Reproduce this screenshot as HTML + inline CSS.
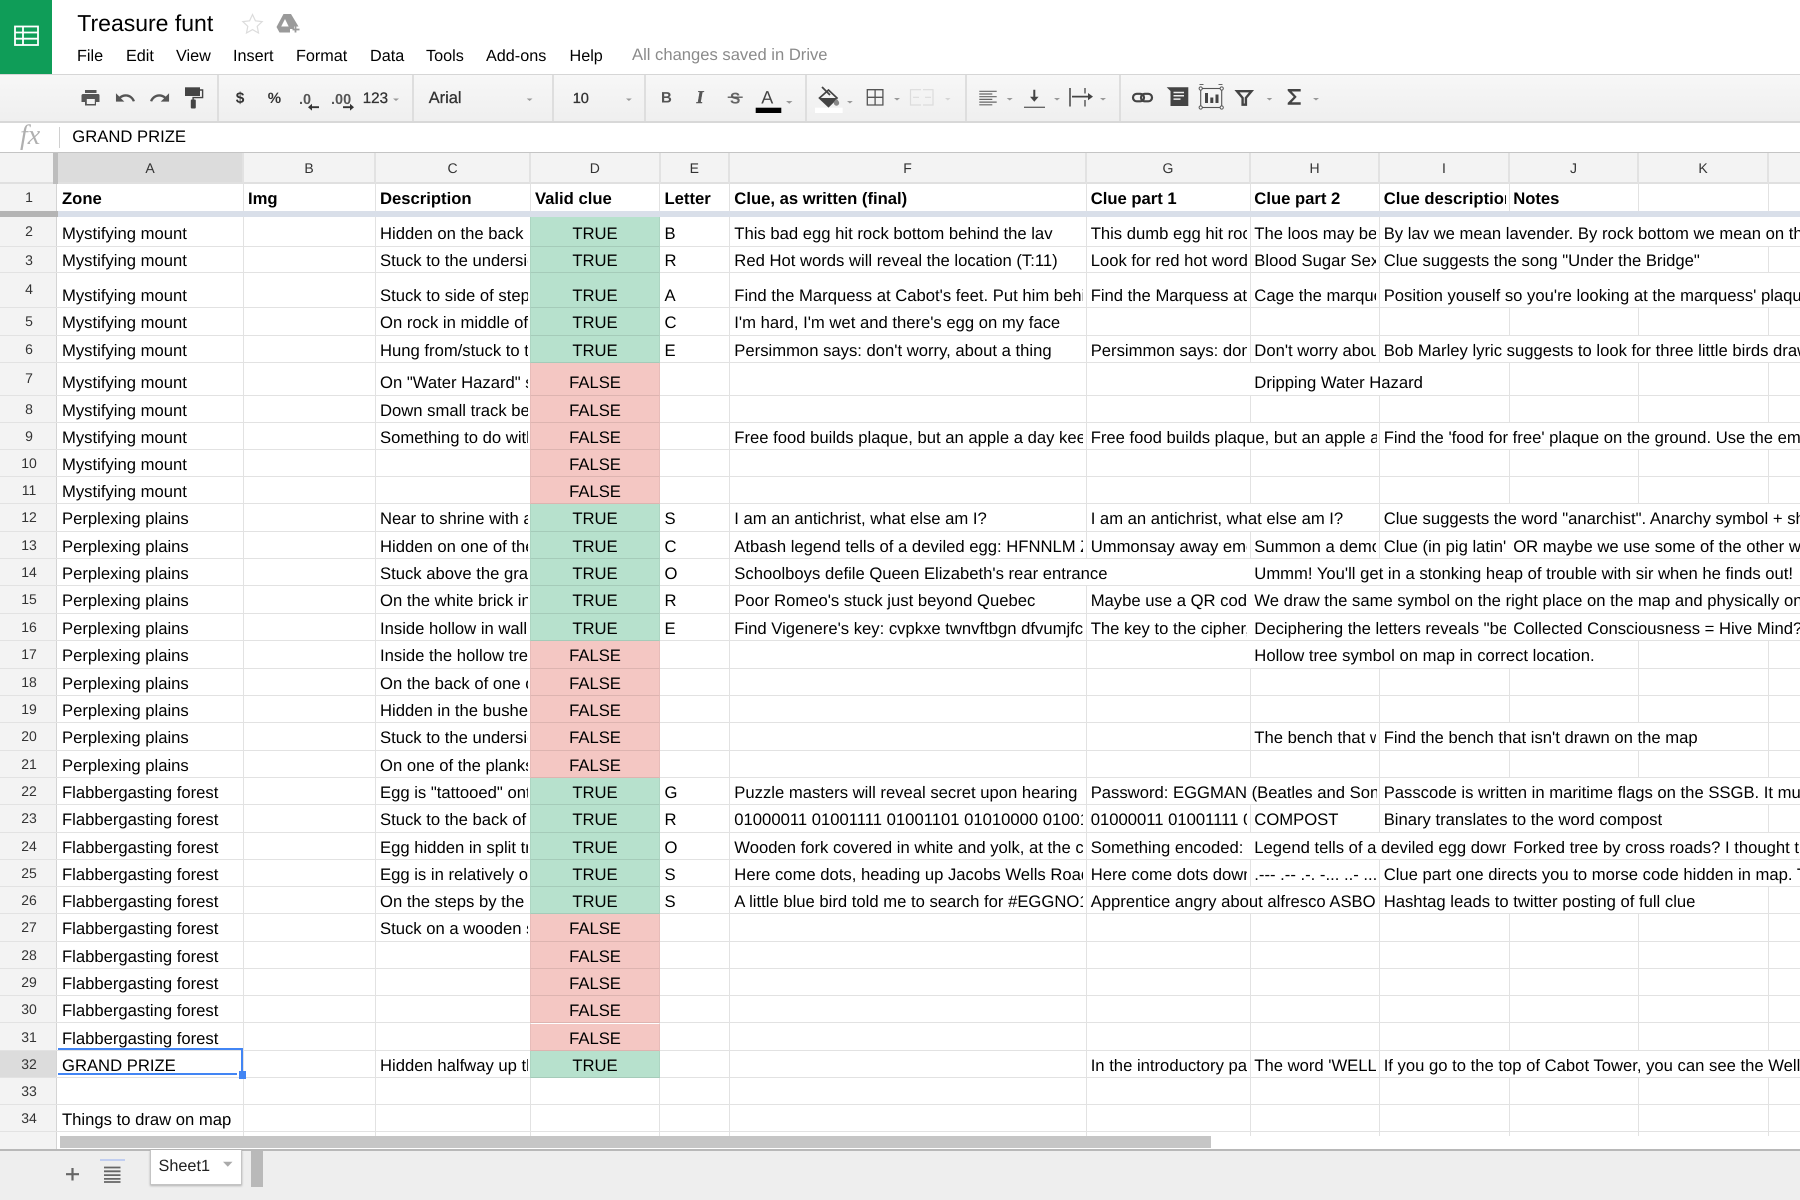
<!DOCTYPE html>
<html lang="en"><head><meta charset="utf-8"><title>Treasure funt</title>
<style>
html,body{margin:0;padding:0;background:#fff}
body{position:relative;width:1800px;height:1200px;overflow:hidden;font-family:"Liberation Sans",Arial,sans-serif;color:#000;text-rendering:geometricPrecision;-webkit-font-smoothing:antialiased;filter:blur(.3px)}
div{box-sizing:border-box}
.abs{position:absolute}
.t{position:absolute;white-space:nowrap}
.tb{position:absolute;left:0;top:74px;width:1800px;height:49px;background:linear-gradient(#f7f7f7,#efefef);border-top:1px solid #d6d6d6;border-bottom:2px solid #d8d8d8}
.sep{position:absolute;top:75px;width:2px;height:46px;background:#dedede}
.v{position:absolute;top:184px;height:952px;width:1px;background:#e2e2e2}
.hc{position:absolute;top:153px;height:31px;background:#f3f3f3;border-right:2px solid #e2e2e2;border-bottom:2px solid #e0e0e0;text-align:center;font-size:14px;line-height:30px;color:#333}
.r{position:absolute;left:0;width:1800px;height:27.3px;border-bottom:1px solid #e2e2e2;font-size:16.65px}
.r>div{position:absolute;top:0;bottom:0;white-space:nowrap;overflow:hidden;padding:var(--p,2px) 0 0 4px;line-height:26px}
.r>.n{left:0;width:57px;padding:0 0 0 2px;background:#f3f3f3;border-right:1px solid #d4d4d4;text-align:center;font-size:14px;color:#333;line-height:var(--l,26px)}
.r>.a{left:58px;width:182px}
.r>.c{left:376px;width:152px}
.r>.d{left:530px;width:130px;text-align:center;padding-left:0;bottom:-1px;border-bottom:1px solid rgba(0,0,0,.09);border-left:1px solid rgba(0,0,0,.05);border-right:1px solid rgba(0,0,0,.05)}
.r>.e{left:660.5px;width:67px}
.r>.f{left:730.3px;width:353px}
.r>.g{left:1086.7px;width:160.5px}
.r>.h{left:1250.3px;width:126px}
.r>.i{left:1379.7px;width:126.5px}
.r>.j{left:1509.2px;width:125px}
.r>.w{background:#fff}
.T{background:#b7e1cd}
.F{background:#f4c7c3}
.b{font-weight:bold}
svg text{font-family:"Liberation Sans",Arial,sans-serif}
</style></head><body>

<div class="abs" style="left:0;top:0;width:52px;height:75px;background:#0f9d58"></div>
<div class="t" style="left:77.300px;top:9px;font-size:23px;line-height:28px">Treasure funt</div>
<div class="t" style="left:77px;top:46px;font-size:16.2px;line-height:20px">File</div>
<div class="t" style="left:126px;top:46px;font-size:16.2px;line-height:20px">Edit</div>
<div class="t" style="left:176px;top:46px;font-size:16.2px;line-height:20px">View</div>
<div class="t" style="left:233px;top:46px;font-size:16.2px;line-height:20px">Insert</div>
<div class="t" style="left:296px;top:46px;font-size:16.2px;line-height:20px">Format</div>
<div class="t" style="left:370px;top:46px;font-size:16.2px;line-height:20px">Data</div>
<div class="t" style="left:426px;top:46px;font-size:16.2px;line-height:20px">Tools</div>
<div class="t" style="left:486px;top:46px;font-size:16.2px;line-height:20px">Add-ons</div>
<div class="t" style="left:569.500px;top:46px;font-size:16.2px;line-height:20px">Help</div>
<div class="t" style="left:632px;top:45px;font-size:16.6px;line-height:20px;color:#8a8a8a">All changes saved in Drive</div>

<div class="tb"></div>
<div class="sep" style="left:217px"></div><div class="sep" style="left:411.500px"></div><div class="sep" style="left:551.500px"></div><div class="sep" style="left:643.500px"></div><div class="sep" style="left:804.500px"></div><div class="sep" style="left:965px"></div><div class="sep" style="left:1118.500px"></div>

<div class="t" style="left:20px;top:121px;font:italic 28px/30px 'Liberation Serif',serif;color:#b0b0b0">fx</div>
<div class="abs" style="left:59px;top:127px;width:1px;height:21px;background:#d0d0d0"></div>
<div class="t" style="left:72.300px;top:125px;font-size:16.65px;line-height:24px">GRAND PRIZE</div>
<div class="abs" style="left:0;top:151.500px;width:1800px;height:2px;background:#c4c4c4"></div>

<div class="hc" style="left:0;width:53px;border-right:0"></div>
<div class="abs" style="left:53px;top:153px;width:5px;height:31px;background:#bdbdbd"></div>
<div class="hc" style="left:58px;width:186px;background:#dcdcdc">A</div>
<div class="hc" style="left:244px;width:132px">B</div>
<div class="hc" style="left:376px;width:155px">C</div>
<div class="hc" style="left:531px;width:129.500px">D</div>
<div class="hc" style="left:660.500px;width:69.500px">E</div>
<div class="hc" style="left:730px;width:357px">F</div>
<div class="hc" style="left:1087px;width:164px">G</div>
<div class="hc" style="left:1251px;width:129px">H</div>
<div class="hc" style="left:1380px;width:130px">I</div>
<div class="hc" style="left:1510px;width:129px">J</div>
<div class="hc" style="left:1639px;width:130px">K</div>
<div class="hc" style="left:1769px;width:31px;border-right:0"></div>

<div class="abs" style="left:0;top:184px;width:57px;height:966px;background:#f3f3f3;border-right:1px solid #d4d4d4"></div>

<div class="v" style="left:243px"></div><div class="v" style="left:375px"></div><div class="v" style="left:530px"></div><div class="v" style="left:659px"></div><div class="v" style="left:729px"></div><div class="v" style="left:1086px"></div><div class="v" style="left:1250px"></div><div class="v" style="left:1379px"></div><div class="v" style="left:1509px"></div><div class="v" style="left:1638px"></div><div class="v" style="left:1768px"></div>

<div class="r b" style="top:184px;height:27px;border-bottom:0"><div class="n" style="font-weight:normal">1</div><div class="a">Zone</div><div class="a" style="left:244px;width:128px">Img</div><div class="c">Description</div><div class="c" style="left:531px;width:126px">Valid clue</div><div class="e">Letter</div><div class="f">Clue, as written (final)</div><div class="g">Clue part 1</div><div class="h">Clue part 2</div><div class="i">Clue description</div><div class="j">Notes</div></div>
<div class="abs" style="left:0;top:211px;width:58px;height:6px;background:#b4b4b4"></div>
<div class="abs" style="left:58px;top:211px;width:1742px;height:6px;background:#d9dfe9"></div>

<div class="r" style="top:217px;height:29.700px;--p:4.400px;--l:28px"><div class="n">2</div><div class="a">Mystifying mount</div><div class="c">Hidden on the back of</div><div class="d T">TRUE</div><div class="e">B</div><div class="f">This bad egg hit rock bottom behind the lav</div><div class="g">This dumb egg hit rock</div><div class="h">The loos may be</div><div class="i w" style="width:420.300px">By lav we mean lavender. By rock bottom we mean on the</div></div>
<div class="r" style="top:246.700px;height:26.600px;--p:1.300px"><div class="n">3</div><div class="a">Mystifying mount</div><div class="c">Stuck to the underside</div><div class="d T">TRUE</div><div class="e">R</div><div class="f">Red Hot words will reveal the location (T:11)</div><div class="g">Look for red hot words</div><div class="h">Blood Sugar Sex Magik</div><div class="i w" style="width:388px">Clue suggests the song "Under the Bridge"</div></div>
<div class="r" style="top:273.300px;height:35px;--p:9.700px;--l:33px"><div class="n">4</div><div class="a">Mystifying mount</div><div class="c">Stuck to side of steps</div><div class="d T">TRUE</div><div class="e">A</div><div class="f">Find the Marquess at Cabot's feet. Put him behind</div><div class="g">Find the Marquess at Cabot</div><div class="h">Cage the marquess</div><div class="i w" style="width:420.300px">Position youself so you're looking at the marquess' plaque</div></div>
<div class="r" style="top:308.300px;height:27.400px"><div class="n">5</div><div class="a">Mystifying mount</div><div class="c">On rock in middle of</div><div class="d T">TRUE</div><div class="e">C</div><div class="f">I'm hard, I'm wet and there's egg on my face</div></div>
<div class="r" style="top:335.700px;height:27.600px"><div class="n">6</div><div class="a">Mystifying mount</div><div class="c">Hung from/stuck to tree</div><div class="d T">TRUE</div><div class="e">E</div><div class="f">Persimmon says: don't worry, about a thing</div><div class="g">Persimmon says: don't</div><div class="h">Don't worry about</div><div class="i w" style="width:420.300px">Bob Marley lyric suggests to look for three little birds drawn</div></div>
<div class="r" style="top:363.300px;height:32.400px;--p:7.100px;--l:30px"><div class="n">7</div><div class="a">Mystifying mount</div><div class="c">On "Water Hazard" sign</div><div class="d F">FALSE</div><div class="h w" style="width:256px">Dripping Water Hazard</div></div>
<div class="r" style="top:395.700px;height:27px"><div class="n">8</div><div class="a">Mystifying mount</div><div class="c">Down small track behind</div><div class="d F">FALSE</div></div>
<div class="r" style="top:422.700px"><div class="n">9</div><div class="a">Mystifying mount</div><div class="c">Something to do with</div><div class="d F">FALSE</div><div class="f">Free food builds plaque, but an apple a day keeps</div><div class="g w" style="width:290px">Free food builds plaque, but an apple a day</div><div class="i w" style="width:420.300px">Find the 'food for free' plaque on the ground. Use the em</div></div>
<div class="r" style="top:450px"><div class="n">10</div><div class="a">Mystifying mount</div><div class="d F">FALSE</div></div>
<div class="r" style="top:477.300px;height:27px"><div class="n">11</div><div class="a">Mystifying mount</div><div class="d F">FALSE</div></div>
<div class="r" style="top:504.300px;height:27.400px"><div class="n">12</div><div class="a">Perplexing plains</div><div class="c">Near to shrine with a</div><div class="d T">TRUE</div><div class="e">S</div><div class="f">I am an antichrist, what else am I?</div><div class="g w" style="width:290px">I am an antichrist, what else am I?</div><div class="i w" style="width:420.300px">Clue suggests the word "anarchist". Anarchy symbol + sh</div></div>
<div class="r" style="top:531.700px"><div class="n">13</div><div class="a">Perplexing plains</div><div class="c">Hidden on one of the</div><div class="d T">TRUE</div><div class="e">C</div><div class="f">Atbash legend tells of a deviled egg: HFNNLM ZDZB</div><div class="g">Ummonsay away emon</div><div class="h">Summon a demon</div><div class="i">Clue (in pig latin's</div><div class="j w" style="width:290.800px">OR maybe we use some of the other w</div></div>
<div class="r" style="top:559px"><div class="n">14</div><div class="a">Perplexing plains</div><div class="c">Stuck above the grate</div><div class="d T">TRUE</div><div class="e">O</div><div class="f w" style="width:518px">Schoolboys defile Queen Elizabeth's rear entrance</div><div class="h w" style="width:549.700px">Ummm! You'll get in a stonking heap of trouble with sir when he finds out!</div></div>
<div class="r" style="top:586.300px;height:27.700px"><div class="n">15</div><div class="a">Perplexing plains</div><div class="c">On the white brick in</div><div class="d T">TRUE</div><div class="e">R</div><div class="f">Poor Romeo's stuck just beyond Quebec</div><div class="g">Maybe use a QR code</div><div class="h w" style="width:549.700px">We draw the same symbol on the right place on the map and physically on</div></div>
<div class="r" style="top:614px"><div class="n">16</div><div class="a">Perplexing plains</div><div class="c">Inside hollow in wall</div><div class="d T">TRUE</div><div class="e">E</div><div class="f">Find Vigenere's key: cvpkxe twnvftbgn dfvumjfc</div><div class="g">The key to the cipher,</div><div class="h w" style="width:256px">Deciphering the letters reveals "be</div><div class="j w" style="width:290.800px">Collected Consciousness = Hive Mind?</div></div>
<div class="r" style="top:641.300px;height:27.400px"><div class="n">17</div><div class="a">Perplexing plains</div><div class="c">Inside the hollow tree</div><div class="d F">FALSE</div><div class="h w" style="width:387px">Hollow tree symbol on map in correct location.</div></div>
<div class="r" style="top:668.700px"><div class="n">18</div><div class="a">Perplexing plains</div><div class="c">On the back of one of</div><div class="d F">FALSE</div></div>
<div class="r" style="top:696px"><div class="n">19</div><div class="a">Perplexing plains</div><div class="c">Hidden in the bushes</div><div class="d F">FALSE</div></div>
<div class="r" style="top:723.300px;height:27.400px"><div class="n">20</div><div class="a">Perplexing plains</div><div class="c">Stuck to the underside</div><div class="d F">FALSE</div><div class="h">The bench that was</div><div class="i w" style="width:388px">Find the bench that isn't drawn on the map</div></div>
<div class="r" style="top:750.700px"><div class="n">21</div><div class="a">Perplexing plains</div><div class="c">On one of the planks</div><div class="d F">FALSE</div></div>
<div class="r" style="top:778px"><div class="n">22</div><div class="a">Flabbergasting forest</div><div class="c">Egg is "tattooed" onto</div><div class="d T">TRUE</div><div class="e">G</div><div class="f">Puzzle masters will reveal secret upon hearing my</div><div class="g w" style="width:290px">Password: EGGMAN (Beatles and Sons)</div><div class="i w" style="width:420.300px">Passcode is written in maritime flags on the SSGB. It mu</div></div>
<div class="r" style="top:805.300px;height:27.400px"><div class="n">23</div><div class="a">Flabbergasting forest</div><div class="c">Stuck to the back of</div><div class="d T">TRUE</div><div class="e">R</div><div class="f">01000011 01001111 01001101 01010000 01001111</div><div class="g">01000011 01001111 01</div><div class="h">COMPOST</div><div class="i w" style="width:388px">Binary translates to the word compost</div></div>
<div class="r" style="top:832.700px"><div class="n">24</div><div class="a">Flabbergasting forest</div><div class="c">Egg hidden in split tree</div><div class="d T">TRUE</div><div class="e">O</div><div class="f">Wooden fork covered in white and yolk, at the cross</div><div class="g">Something encoded:</div><div class="h w" style="width:256px">Legend tells of a deviled egg down</div><div class="j w" style="width:290.800px">Forked tree by cross roads? I thought t</div></div>
<div class="r" style="top:860px"><div class="n">25</div><div class="a">Flabbergasting forest</div><div class="c">Egg is in relatively open</div><div class="d T">TRUE</div><div class="e">S</div><div class="f">Here come dots, heading up Jacobs Wells Road</div><div class="g">Here come dots down</div><div class="h">.--- .-- .-. -... ..- ...</div><div class="i w" style="width:420.300px">Clue part one directs you to morse code hidden in map. T</div></div>
<div class="r" style="top:887.300px;height:27px"><div class="n">26</div><div class="a">Flabbergasting forest</div><div class="c">On the steps by the</div><div class="d T">TRUE</div><div class="e">S</div><div class="f">A little blue bird told me to search for #EGGNO1</div><div class="g w" style="width:290px">Apprentice angry about alfresco ASBO</div><div class="i w" style="width:388px">Hashtag leads to twitter posting of full clue</div></div>
<div class="r" style="top:914.300px"><div class="n">27</div><div class="a">Flabbergasting forest</div><div class="c">Stuck on a wooden sign</div><div class="d F">FALSE</div></div>
<div class="r" style="top:941.600px"><div class="n">28</div><div class="a">Flabbergasting forest</div><div class="d F">FALSE</div></div>
<div class="r" style="top:968.900px"><div class="n">29</div><div class="a">Flabbergasting forest</div><div class="d F">FALSE</div></div>
<div class="r" style="top:996.200px"><div class="n">30</div><div class="a">Flabbergasting forest</div><div class="d F">FALSE</div></div>
<div class="r" style="top:1023.500px;height:27.200px"><div class="n">31</div><div class="a">Flabbergasting forest</div><div class="d F">FALSE</div></div>
<div class="r" style="top:1050.700px;height:27.600px"><div class="n" style="background:#dcdcdc">32</div><div class="a">GRAND PRIZE</div><div class="c">Hidden halfway up the</div><div class="d T">TRUE</div><div class="g">In the introductory para</div><div class="h">The word 'WELL'</div><div class="i w" style="width:420.300px">If you go to the top of Cabot Tower, you can see the Well</div></div>
<div class="r" style="top:1078.300px;height:26.700px"><div class="n">33</div></div>
<div class="r" style="top:1105px"><div class="n">34</div><div class="a">Things to draw on map</div></div>

<div class="abs" style="left:58px;top:1048px;width:184px;height:2px;background:#4285f4"></div>
<div class="abs" style="left:58px;top:1072.500px;width:179px;height:2px;background:#4285f4"></div>
<div class="abs" style="left:240.500px;top:1048px;width:2px;height:24px;background:#4285f4"></div>
<div class="abs" style="left:239px;top:1071px;width:6.500px;height:8px;background:#4285f4"></div>

<div class="abs" style="left:60px;top:1136px;width:1151px;height:11.500px;background:#c6c6c6"></div>
<div class="abs" style="left:0;top:1149px;width:1800px;height:51px;background:#eee;border-top:2px solid #b8b8b8"></div>
<div class="abs" style="left:150px;top:1150px;width:92px;height:35px;background:#fff;border:1px solid #c4c4c4;border-top:0;box-shadow:0 1px 2px rgba(0,0,0,.25)"></div>
<div class="t" style="left:158.500px;top:1156px;font-size:16.25px;line-height:21px;color:#222">Sheet1</div>
<div class="abs" style="left:251px;top:1151px;width:11.500px;height:35.500px;background:#b9b9b9"></div>

<svg class="abs" style="left:0;top:0" width="1800" height="1200" viewBox="0 0 1800 1200">
<!-- sheets logo -->
<g fill="none" stroke="#fff" stroke-width="1.800"><rect x="15" y="26.500" width="23" height="18.500"/><path d="M15 32.500h23M15 38.700h23M23 26.500v18.500"/></g>
<!-- star -->
<path d="M252.500 14.500l2.900 6.300 6.800.8-5 4.700 1.300 6.700-6-3.400-6 3.400 1.300-6.700-5-4.700 6.800-.8z" fill="#fff" stroke="#dcdcdc" stroke-width="1.200"/>
<!-- drive -->
<path d="M283.500 14h7.500l7.500 12.500h-4.500v2.500h-4v3.500h-10.500l-3-5.500zM285 19l-3.800 7.500h7.500z" fill="#9a9a9a" fill-rule="evenodd"/>
<path d="M295.500 26.500v6M292.500 29.500h7" stroke="#9a9a9a" stroke-width="1.800" fill="none"/>
<!-- print -->
<path d="M85 90h11.500v3H85zM83.200 94h15a1.500 1.500 0 0 1 1.300 1.500V102H96v3.500H85V102h-3.500v-6.500A1.500 1.500 0 0 1 83.200 94z" fill="#555"/>
<rect x="86.800" y="99" width="8" height="5" fill="#f3f3f3"/>
<!-- undo / redo -->
<path transform="translate(114.100 86.800) scale(.93)" d="M12.500 8c-2.650 0-5.050.99-6.900 2.600L2 7v9h9l-3.620-3.620c1.390-1.160 3.160-1.880 5.120-1.880 3.540 0 6.550 2.310 7.600 5.500l2.370-.78C21.080 11.030 17.150 8 12.500 8z" fill="#555"/>
<path transform="translate(148.600 86.800) scale(.93)" d="M18.400 10.600C16.550 8.990 14.150 8 11.500 8c-4.650 0-8.580 3.030-9.960 7.220L3.900 16c1.050-3.190 4.050-5.500 7.600-5.500 1.950 0 3.730.72 5.120 1.880L13 16h9V7l-3.600 3.600z" fill="#555"/>
<!-- paint format -->
<path d="M185 87.300h15v8.700h-15z" fill="#444"/><path d="M200 90h2.600v7.600h-9.500v2.200" fill="none" stroke="#444" stroke-width="1.400"/><rect x="190.800" y="99.500" width="5" height="9" rx="1" fill="#444"/>
<!-- format -->
<text x="235.800" y="102.800" font-size="15.500" font-weight="bold" fill="#333">$</text>
<text x="267.800" y="102.800" font-size="15" font-weight="bold" fill="#333">%</text>
<text x="299" y="104" font-size="14.500" fill="#555" font-weight="bold">.0</text>
<path d="M319 106.300h-7v-2.500l-4 3.400 4 3.400v-2.500h7z" fill="#333"/>
<text x="331" y="104" font-size="14.500" fill="#555" font-weight="bold">.00</text>
<path d="M343 106.300h7v-2.500l4 3.400-4 3.400v-2.500h-7z" fill="#333"/>
<text x="362.700" y="102.800" font-size="15.200" fill="#333" stroke="#333" stroke-width=".3">123</text>
<text x="428.700" y="102.800" font-size="16.400" fill="#333" stroke="#333" stroke-width=".3">Arial</text>
<text x="572.700" y="102.800" font-size="14.600" fill="#333" stroke="#333" stroke-width=".3">10</text>
<text x="661" y="102.500" font-size="15" font-weight="bold" fill="#555">B</text>
<text x="696.500" y="103" font-size="18" font-weight="bold" font-style="italic" style="font-family:'Liberation Serif',serif" fill="#555" stroke="#555" stroke-width=".4">I</text>
<text x="730" y="103.500" font-size="15.500" font-weight="bold" fill="#666">S</text>
<path d="M727.700 97.200h15" stroke="#555" stroke-width="1.300"/>
<text x="761.200" y="103.300" font-size="18" fill="#444">A</text>
<rect x="755.700" y="107.700" width="25.600" height="5.300" fill="#000"/>
<!-- bucket -->
<path d="M819.500 98L828.500 90 837 98 828.500 106.500z" fill="none" stroke="#444" stroke-width="1.700"/>
<path d="M819.500 98h17.500L828.500 106.500z" fill="#444"/>
<path d="M822 87l8 8" stroke="#444" stroke-width="1.800"/>
<path d="M836.500 98.500c1.500 2 2.700 3 2.700 4.500a2.700 2.700 0 0 1-5.400 0c0-1.500 1.200-2.500 2.700-4.500z" fill="#888"/>
<rect x="815" y="107.700" width="27.700" height="5.300" fill="#fff"/>
<!-- borders -->
<path d="M867.300 89.700h15.600v15.300h-15.600zM875.100 89.700v15.300M867.300 97.300h15.600" fill="none" stroke="#555" stroke-width="1.300"/>
<!-- merge -->
<path d="M921 89.700h-10.500v15.300H921M923 89.700h10v15.300h-10M913 97.300h6M931 97.300h-6" fill="none" stroke="#dcdcdc" stroke-width="1.200"/>
<!-- align -->
<path d="M979.300 91.300h17.400M979.300 94h13M979.300 96.700h17.400M979.300 99.400h13M979.300 102.100h17.400M979.300 104.800h13" stroke="#666" stroke-width="1.200"/>
<!-- valign -->
<path d="M1033.300 89.700h2v7h3.300l-4.300 5-4.300-5h3.300z" fill="#444"/><path d="M1024 107.300h21" stroke="#666" stroke-width="1.400"/>
<!-- wrap -->
<path d="M1070 88v18.500" stroke="#444" stroke-width="1.500"/><path d="M1072 96.600h17" stroke="#444" stroke-width="1.800"/><path d="M1088 93l5 3.600-5 3.600z" fill="#444"/><path d="M1085 88v5.500M1085 100v6.500" stroke="#444" stroke-width="1.300"/>
<!-- link -->
<rect x="1133" y="93.800" width="11" height="7.500" rx="3.700" fill="none" stroke="#444" stroke-width="2.200"/><rect x="1141" y="93.800" width="11" height="7.500" rx="3.700" fill="none" stroke="#444" stroke-width="2.200"/>
<!-- comment -->
<path d="M1166.700 87.300h21.600V106H1170.500V91z" fill="#444"/><path d="M1173.500 92.500h10.500M1173.500 95.800h10.500M1173.500 99.100h7" stroke="#eee" stroke-width="1.500"/>
<!-- chart -->
<rect x="1200.700" y="88.500" width="21" height="19" fill="none" stroke="#555" stroke-width="1.100"/>
<g fill="#fff" stroke="#555" stroke-width="1"><circle cx="1200.700" cy="88.500" r="1.600"/><circle cx="1221.700" cy="88.500" r="1.600"/><circle cx="1200.700" cy="107.500" r="1.600"/><circle cx="1221.700" cy="107.500" r="1.600"/></g>
<path d="M1199.500 84.500h4M1218.500 84.500h4" stroke="#666" stroke-width="1"/>
<path d="M1205 93h3v10h-3zM1210.300 97.500h3v5.500h-3zM1215.500 94.500h3v8.500h-3z" fill="#444"/>
<!-- filter -->
<path d="M1237 91.200h14.500l-5.600 6.700v6.800h-3.300v-6.800z" fill="none" stroke="#444" stroke-width="2.400"/>
<!-- sigma -->
<path d="M1300.700 89h-13v1.800l6 6.100-6 6v1.800h13v-2.500h-9l5-5.300-5-5.400h9z" fill="#444"/>
<!-- carets -->
<g fill="#999"><path d="M393 98.500h6l-3 2.500zM526.700 98.500h5.800l-2.900 2.500zM626 98.500h5.800l-2.900 2.500zM786 101h6.500l-3.200 2.700zM847 101h5.800l-2.900 2.500zM894 98h6l-3 2.500zM1006.700 98h6l-3 2.500zM1054 98h6l-3 2.500zM1100 98h6l-3 2.500zM1266.700 98h5.500l-2.700 2.500zM1313 98h6l-3 2.500z"/><path d="M945 98h5.500l-2.700 2.500z" fill="#d5d5d5"/></g>
<!-- footer icons -->
<path d="M72.500 1168v12.500M66 1174.200h13" stroke="#666" stroke-width="2.200"/>
<path d="M100 1160h25" stroke="#a6bcf2" stroke-width="1.300"/>
<path d="M104 1167.500h16.500M104 1171.300h16.500M104 1175.100h16.500M104 1178.900h16.500M104 1182h16.500" stroke="#666" stroke-width="1.800"/>
<path d="M223 1161.700h9.500l-4.700 5z" fill="#aaa"/>
</svg>
</body></html>
